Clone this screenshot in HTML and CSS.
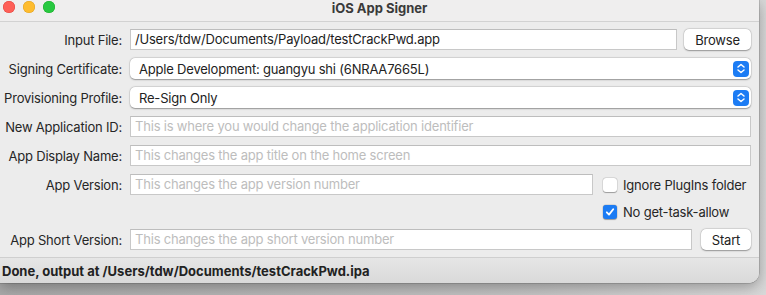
FILE: index.html
```html
<!DOCTYPE html>
<html lang="en">
<head>
    <meta charset="UTF-8">
    <title>iOS App Signer</title>
    <link rel="stylesheet" href="styles.css">
</head>
<body>

    <div class="janela">
        <div class="titulo">
            <div class="semaforo">
                <span class="luz vermelho"></span>
                <span class="luz amarelo"></span>
                <span class="luz verde"></span>
            </div>
            <h1>iOS App Signer</h1>
        </div>

        <div class="formulario">
            <label class="rotulo">Input File:</label>
            <div class="linha">
                <div class="campo">/Users/tdw/Documents/Payload/testCrackPwd.app</div>
                <button class="botao browse">Browse</button>
            </div>

            <label class="rotulo">Signing Certificate:</label>
            <div class="popup">
                <span>Apple Development: guangyu shi (6NRAA7665L)</span>
                <span class="seta">
                    <svg width="10" height="11" viewBox="0 0 10 11"><path d="M2 4 L5 1.5 L8 4 M2 7 L5 9.5 L8 7" fill="none" stroke="#fff" stroke-width="1.5" stroke-linecap="round" stroke-linejoin="round"/></svg>
                </span>
            </div>

            <label class="rotulo">Provisioning Profile:</label>
            <div class="popup">
                <span>Re-Sign Only</span>
                <span class="seta">
                    <svg width="10" height="11" viewBox="0 0 10 11"><path d="M2 4 L5 1.5 L8 4 M2 7 L5 9.5 L8 7" fill="none" stroke="#fff" stroke-width="1.5" stroke-linecap="round" stroke-linejoin="round"/></svg>
                </span>
            </div>

            <label class="rotulo">New Application ID:</label>
            <div class="campo vazio">This is where you would change the application identifier</div>

            <label class="rotulo">App Display Name:</label>
            <div class="campo vazio">This changes the app title on the home screen</div>

            <label class="rotulo">App Version:</label>
            <div class="linha">
                <div class="campo vazio">This changes the app version number</div>
                <div class="opcao">
                    <span class="caixa"></span>
                    Ignore PlugIns folder
                </div>
            </div>

            <span class="rotulo"></span>
            <div class="linha curta">
                <div class="espaco"></div>
                <div class="opcao">
                    <span class="caixa marcada">
                        <svg width="10" height="10" viewBox="0 0 10 10"><path d="M1.8 5.3 L4 7.6 L8.2 2.2" fill="none" stroke="#fff" stroke-width="1.8" stroke-linecap="round" stroke-linejoin="round"/></svg>
                    </span>
                    No get-task-allow
                </div>
            </div>

            <label class="rotulo">App Short Version:</label>
            <div class="linha">
                <div class="campo vazio">This changes the app short version number</div>
                <button class="botao start">Start</button>
            </div>
        </div>

        <div class="status">Done, output at /Users/tdw/Documents/testCrackPwd.ipa</div>
    </div>

</body>
</html>
```

FILE: styles.css
```css
* {
    margin: 0;
    padding: 0;
    box-sizing: border-box;
}

body {
    width: 766px;
    height: 295px;
    overflow: hidden;
    background: linear-gradient(to right, #a9a9a9, #c4c4c4 70%, #d8d8d8);
    font-family: 'Inter', 'Roboto', 'Liberation Sans', sans-serif;
    font-size: 13px;
    letter-spacing: -0.2px;
    color: #262626;
}

.janela {
    width: 759px;
    height: 283px;
    background: #ececec;
    border-bottom-right-radius: 10px;
    box-shadow: 0 4px 14px rgba(0, 0, 0, 0.3), 0 0 0 0.5px rgba(0, 0, 0, 0.25);
    display: flex;
    flex-direction: column;
    overflow: hidden;
}

/* Barra de titulo */
.titulo {
    height: 22px;
    background: #efeeee;
    border-bottom: 1px solid #d2d2d2;
    display: flex;
    align-items: flex-start;
    justify-content: center;
    position: relative;
}

.titulo h1 {
    font-size: 13px;
    font-weight: bold;
    letter-spacing: 0;
    color: #3a3a3a;
    line-height: 16px;
}

.semaforo {
    position: absolute;
    left: 3px;
    top: 1px;
    display: flex;
    gap: 8px;
}

.luz {
    width: 12px;
    height: 12px;
    border-radius: 50%;
}

.vermelho { background: #fe5f57; box-shadow: inset 0 0 0 0.5px #e0443e; }
.amarelo { background: #febc2e; box-shadow: inset 0 0 0 0.5px #dea123; }
.verde { background: #28c840; box-shadow: inset 0 0 0 0.5px #1aab29; }

/* Formulario */
.formulario {
    display: grid;
    grid-template-columns: 122px 1fr;
    column-gap: 8px;
    row-gap: 8px;
    padding: 7px 8px 7px 0;
    align-items: center;
}

.rotulo {
    text-align: right;
    white-space: nowrap;
    color: #262626;
}

.linha {
    display: flex;
    align-items: center;
    height: 21px;
}

.linha.curta {
    height: 18px;
}

.espaco {
    flex: 1;
}

.campo {
    flex: 1;
    height: 21px;
    background: #fff;
    border: 1px solid #c8c8c8;
    border-top-color: #bdbdbd;
    padding: 0 4px;
    line-height: 19px;
    color: #1d1d1d;
    white-space: nowrap;
    overflow: hidden;
}

.campo.vazio {
    color: #bdbdbd;
}

.botao {
    height: 21px;
    background: #fff;
    border: none;
    border-radius: 5px;
    box-shadow: 0 0.5px 1.5px rgba(0, 0, 0, 0.35), 0 0 0 0.5px rgba(0, 0, 0, 0.08);
    font-family: inherit;
    font-size: 13px;
    letter-spacing: inherit;
    color: #222;
}

.browse {
    width: 67px;
    margin-left: 7px;
}

.start {
    width: 50px;
    margin-left: 9px;
}

.popup {
    height: 21px;
    background: #fff;
    border-radius: 5px;
    box-shadow: 0 0.5px 1.5px rgba(0, 0, 0, 0.35), 0 0 0 0.5px rgba(0, 0, 0, 0.08);
    display: flex;
    align-items: center;
    justify-content: space-between;
    padding: 0 2px 0 9px;
    color: #222;
}

.seta {
    width: 16px;
    height: 16px;
    border-radius: 4px;
    background: #1c7cf4;
    display: flex;
    align-items: center;
    justify-content: center;
}

.opcao {
    width: 148px;
    margin-left: 10px;
    display: flex;
    align-items: center;
    gap: 6px;
    white-space: nowrap;
}

.caixa {
    width: 14px;
    height: 14px;
    border-radius: 3px;
    background: #fff;
    box-shadow: 0 0.5px 1px rgba(0, 0, 0, 0.3), 0 0 0 0.5px rgba(0, 0, 0, 0.12);
    display: flex;
    align-items: center;
    justify-content: center;
}

.caixa.marcada {
    background: #1c7cf4;
}

/* Barra de status */
.status {
    flex: 1;
    border-top: 1px solid #cfcfcf;
    background: linear-gradient(#e6e6e6, #d9d9d9);
    font-weight: bold;
    letter-spacing: 0;
    color: #222;
    padding: 5px 2px 0;
}
```
